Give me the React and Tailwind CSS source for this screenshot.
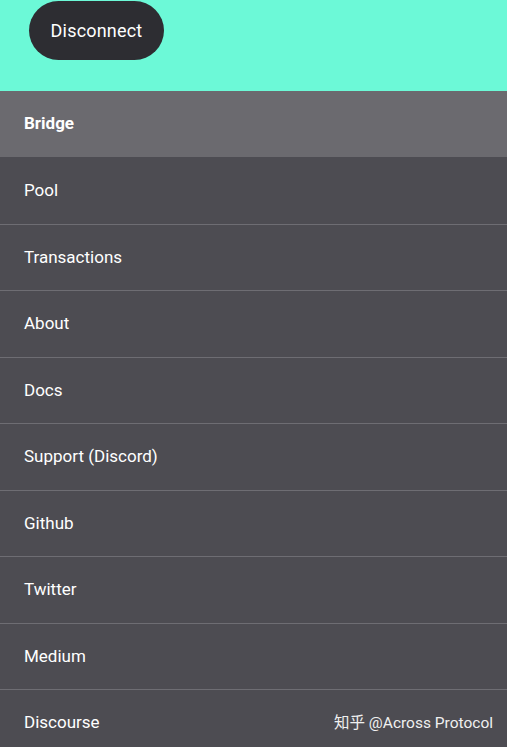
import React from "react";

const items = [
  "Pool",
  "Transactions",
  "About",
  "Docs",
  "Support (Discord)",
  "Github",
  "Twitter",
  "Medium",
  "Discourse",
];

export default function App() {
  return (
    <div
      className="relative min-h-screen bg-[#4d4c52] overflow-hidden"
      style={{ fontFamily: "Roboto, 'Noto Sans CJK SC', sans-serif" }}
    >
      {/* Header */}
      <div className="h-[91px] bg-[#6cf9d7] pl-[29px] pt-[1px]">
        <button className="h-[59px] w-[135px] rounded-full bg-[#2d2d32] text-[18px] text-white tracking-[0.2px]">
          Disconnect
        </button>
      </div>

      {/* Menu */}
      <div className="flex h-[66px] items-center bg-[#6b6a6f] px-6 text-[17px] font-bold text-white">
        Bridge
      </div>
      {items.map((item, i) => (
        <div
          key={item}
          className={`flex h-[66.5px] items-center px-6 text-[17px] text-white ${
            i > 0 ? "border-t border-[#6e6d73]" : ""
          }`}
        >
          {item}
        </div>
      ))}

      {/* Watermark */}
      <div className="absolute right-[14px] top-[713px] text-[15.5px] leading-[20px] text-[#f0f0f0]">
        知乎 @Across Protocol
      </div>
    </div>
  );
}
